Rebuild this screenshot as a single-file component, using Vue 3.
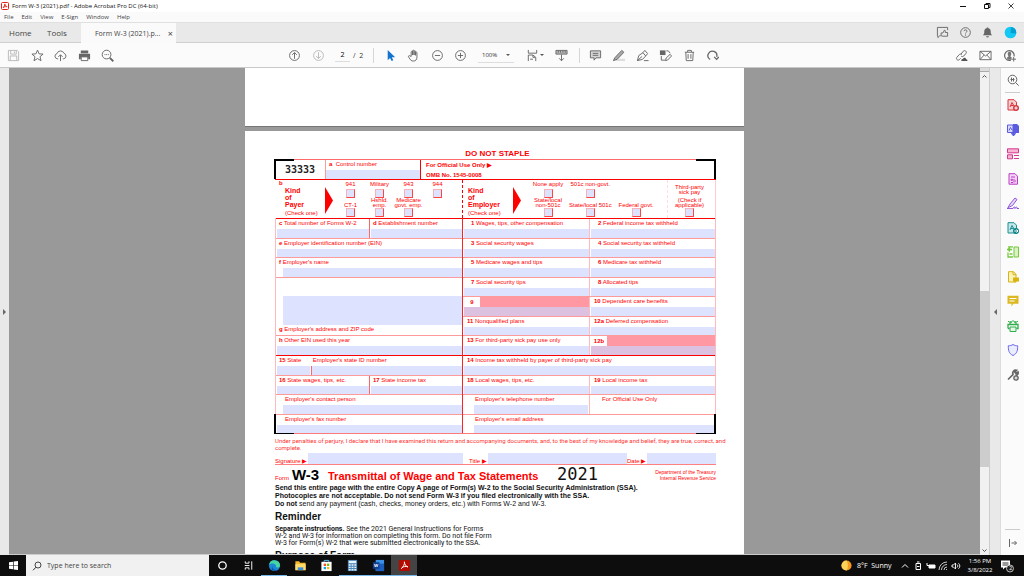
<script setup>
const payerKinds = [
  { top: ['941'], bottom: ['CT-1'] },
  { top: ['Military'], bottom: ['Hshld.', 'emp.'] },
  { top: ['943'], bottom: ['Medicare', 'govt. emp.'] },
  { top: ['944'], bottom: null },
]
const employerKinds = [
  { top: ['None apply'], bottom: ['State/local', 'non-501c'] },
  { top: ['501c non-govt.'], bottom: ['State/local 501c'] },
  { top: null, bottom: ['Federal govt.'] },
]
const leftRows = [
  { cells: [{ n: 'c', t: 'Total number of Forms W-2' }, { n: 'd', t: 'Establishment number' }] },
  { cells: [{ n: 'e', t: 'Employer identification number (EIN)' }] },
  { cells: [{ n: 'f', t: "Employer's name", c: 'indent wide' }] },
  { cells: [{ n: 'g', t: "Employer's address and ZIP code", c: 'address' }] },
  { cells: [{ n: 'h', t: 'Other EIN used this year' }] },
  { strong: true, c: 'state', cells: [{ n: '15', t: 'State' }, { n: '', t: "Employer's state ID number" }] },
  { cells: [{ n: '16', t: 'State wages, tips, etc.' }, { n: '17', t: 'State income tax' }] },
  { cells: [{ n: '', t: "Employer's contact person", c: 'indent contact' }] },
  { cells: [{ n: '', t: "Employer's fax number", c: 'contact' }] },
]
const rightRows = [
  { cells: [{ n: '1', t: 'Wages, tips, other compensation' }, { n: '2', t: 'Federal income tax withheld' }] },
  { cells: [{ n: '3', t: 'Social security wages' }, { n: '4', t: 'Social security tax withheld' }] },
  { cells: [{ n: '5', t: 'Medicare wages and tips' }, { n: '6', t: 'Medicare tax withheld' }] },
  { cells: [{ n: '7', t: 'Social security tips' }, { n: '8', t: 'Allocated tips' }] },
  { cells: [{ n: '9', t: '', c: 'shaded' }, { n: '10', t: 'Dependent care benefits', c: 'ten' }] },
  { cells: [{ n: '11', t: 'Nonqualified plans', c: 'ten' }, { n: '12a', t: 'Deferred compensation', c: 'ten' }] },
  { cells: [{ n: '13', t: 'For third-party sick pay use only', c: 'ten' }, { n: '12b', t: '', c: 'shaded' }] },
  { strong: true, cells: [{ n: '14', t: 'Income tax withheld by payer of third-party sick pay', c: 'ten' }] },
  { cells: [{ n: '18', t: 'Local wages, tips, etc.', c: 'ten' }, { n: '19', t: 'Local income tax', c: 'ten' }] },
  { cells: [{ n: '', t: "Employer's telephone number", c: 'indent contact' }, { n: '', t: 'For Official Use Only', c: 'contact blank' }] },
  { cells: [{ n: '', t: "Employer's email address", c: 'indent contact' }] },
]
</script>

<template>
  <div class="app">
    <header class="titlebar">
      <svg class="i8" viewBox="0 0 8 8"><rect x="0.5" y="0.5" width="7" height="7" rx="1" fill="#fff" stroke="#e2231a" /><path d="M2 6c1-1 2-3 1.800-4.200M3.800 2c.4 1.500 1.200 2.300 2.400 2.600M2.300 5.300c1-.6 2.500-.8 3.800-.6" stroke="#e2231a" fill="none" stroke-width=".9" /></svg>
      <span class="title">Form W-3 (2021).pdf - Adobe Acrobat Pro DC (64-bit)</span>
      <div class="win">
        <button aria-label="Minimize"><svg viewBox="0 0 8 8"><path d="M1 4.500h6" stroke="#111" /></svg></button>
        <button aria-label="Restore"><svg viewBox="0 0 8 8"><path d="M1.500 2.500h4v4h-4zM3 2.500v-1h4v4H5.500" stroke="#111" fill="none" /></svg></button>
        <button aria-label="Close"><svg viewBox="0 0 8 8"><path d="M1.500 1.500l5 5M6.500 1.500l-5 5" stroke="#111" stroke-width=".8" /></svg></button>
      </div>
    </header>
    <nav class="menubar">
      <button>File</button><button>Edit</button><button>View</button><button>E-Sign</button><button>Window</button><button>Help</button>
    </nav>
    <div class="tabs">
      <button class="tab home">Home</button>
      <button class="tab tools">Tools</button>
      <div class="tab current"><span>Form W-3 (2021).p...</span><button aria-label="Close tab">×</button></div>
      <div class="tabicons">
        <svg viewBox="0 0 14 14"><path d="M5 10.500H4l-2 2v-2H1.500v-9h11v3" class="s" /><path d="M5.500 7.500h2l1.500-3 1 .5v2h2.500v4h-5l-2-.5z" class="s" /></svg>
        <svg viewBox="0 0 14 14"><circle cx="7" cy="7" r="5.200" class="s" /><path d="M5.400 5.600c0-2 3.200-2 3.200 0 0 1.200-1.600 1.100-1.600 2.500M7 9.200v1.200" class="s" /></svg>
        <svg viewBox="0 0 14 14"><path d="M7 1.500c.8 0 1 .5 1 1 2 .6 2.500 2 2.500 4 0 2 .5 2.500 1.500 3.500H2c1-1 1.500-1.500 1.500-3.500 0-2 .5-3.400 2.500-4 0-.5.2-1 1-1zM5.500 11h3a1.500 1.500 0 0 1-3 0z" fill="#666" /></svg>
        <svg viewBox="0 0 14 14"><circle cx="7" cy="7" r="6.300" fill="#12c8f4" /><path d="M7 7.500L7.600 1A6 6 0 0 1 13 8z" fill="#05a0cf" /></svg>
      </div>
    </div>
    <div class="toolbar">
      <div class="group g1">
        <button aria-label="Save"><svg viewBox="0 0 14 14"><path d="M1.500 1.500h9.500l1.500 1.500v9.500h-11z M4 1.500v4h6v-4M3.500 12.500v-5h7v5M8 2.500v2" class="s dim" /></svg></button>
        <button aria-label="Star"><svg viewBox="0 0 14 14"><path d="M7 1.200l1.700 4 4.300.3-3.300 2.800 1.100 4.300L7 10.300l-3.800 2.300 1.100-4.300L1 5.500l4.300-.3z" class="s" /></svg></button>
        <button aria-label="Upload"><svg viewBox="0 0 14 14"><path d="M4.500 10.500h-1a2.800 2.800 0 0 1-.3-5.500 4 4 0 0 1 7.600-.3 3 3 0 0 1-.3 5.800h-1M7 13V6.500M4.700 8.500L7 6.200l2.300 2.300" class="s" /></svg></button>
        <button aria-label="Print"><svg viewBox="0 0 14 14"><path d="M3 1.500h8v3H3zM1 5h12v6h-2V9H3v2H1z" fill="#666" /><path d="M3.500 8.500h7v4h-7z" fill="#fff" stroke="#666" /></svg></button>
        <button aria-label="Find"><svg viewBox="0 0 14 14"><circle cx="6" cy="6" r="4.700" class="s" /><path d="M9.500 9.500l3.700 3.700" class="s" stroke-width="2" /><path d="M3.800 6h4.800" class="s" stroke-dasharray="1 .8" /></svg></button>
      </div>
      <div class="group g2">
        <button aria-label="Previous page"><svg viewBox="0 0 14 14"><circle cx="7" cy="7" r="5.300" class="s" /><path d="M7 10.500V4M4.500 6.300L7 3.800l2.500 2.500" class="s" /></svg></button>
        <button aria-label="Next page"><svg viewBox="0 0 14 14"><circle cx="7" cy="7" r="5.300" class="s dim" /><path d="M7 3.500V10M4.500 7.700L7 10.200l2.500-2.500" class="s dim" /></svg></button>
      </div>
      <div class="pager"><input aria-label="Page number" value="2" /><span>/ &nbsp;2</span></div>
      <i class="sep"></i>
      <div class="group g3">
        <button aria-label="Select"><svg viewBox="0 0 14 14"><path d="M4 1v11l2.500-2.300L8.200 13l1.800-.9-1.600-3.200H12z" fill="#1473cf" /></svg></button>
        <button aria-label="Hand"><svg viewBox="0 0 14 14"><path d="M4.500 8V3.200c0-1 1.500-1 1.500 0V6.500 2c0-1 1.600-1 1.600 0v4.500V2.600c0-1 1.600-1 1.600 0v4.200V4c0-1 1.500-1 1.500 0v5c0 2.500-1.500 4-4 4-2 0-3-1-5-4.500-.6-1.200.8-1.800 1.500-1z" class="s" /></svg></button>
        <button aria-label="Zoom out"><svg viewBox="0 0 14 14"><circle cx="7" cy="7" r="5.300" class="s" /><path d="M4.200 7h5.600" class="s" /></svg></button>
        <button aria-label="Zoom in"><svg viewBox="0 0 14 14"><circle cx="7" cy="7" r="5.300" class="s" /><path d="M4.200 7h5.600M7 4.200v5.600" class="s" /></svg></button>
      </div>
      <button class="zoom"><span>100%</span><i class="caret"></i></button>
      <button class="fit" aria-label="Fit page"><svg viewBox="0 0 14 14"><path d="M2.500 1v3.500h9V1M2.500 13V6.500h5l3 2.500V13M7.500 6.500v2.500H10M4.500 11h3" class="s" /></svg><i class="caret"></i></button>
      <button class="rule" aria-label="Scroll mode"><svg viewBox="0 0 14 14"><path d="M1 1.500h12v4H1z" fill="#bbb" stroke="#666" /><path d="M3.500 2v2M6 2v2M8.500 2v2M11 2v2" stroke="#666" /><path d="M7 6v6.500M4.500 10L7 12.700 9.500 10" class="s" /></svg></button>
      <i class="sep"></i>
      <div class="group g4">
        <button aria-label="Comment"><svg viewBox="0 0 14 14"><path d="M1.500 2h11v7.500H7.500L5.500 12V9.500h-4z" fill="#d6d6d6" stroke="#666" /><path d="M4 4.700h6M4 6.800h6" class="s" /></svg></button>
        <button aria-label="Highlight"><svg viewBox="0 0 14 14"><path d="M6 10.500h8V13H4z" fill="#ddd" /><path d="M3 9.500L10.500 1.500 12.800 3.500 5.500 11.200 1.500 12.500z" fill="#aaa" stroke="#666" /></svg></button>
        <button aria-label="Sign"><svg viewBox="0 0 14 14"><path d="M1.500 12.500L3 7l4.500-3L10.500 7.500 7 11.200zM7.500 4L9.500 1.500 12.500 5l-2 2.500M1.500 12.500L6.500 8M8.500 12.500h5" class="s" /></svg></button>
        <button aria-label="Stamp"><svg viewBox="0 0 14 14"><path d="M1 1.500h6v5H1z" fill="#666" /><path d="M8 2h2L12 4.500M2.500 7.500v4.500h4M7 12.500l.7-2.800 4.300-4L13.500 7.500 9.200 12z" class="s" /></svg></button>
        <button aria-label="Delete"><svg viewBox="0 0 14 14"><path d="M2 3.500h10M5 3.300V1.500h4v1.800M3 3.500l.5 9h7l.5-9M5.500 5.500v5M8.500 5.500v5" class="s" /></svg></button>
        <button aria-label="Rotate"><svg viewBox="0 0 14 14"><path d="M4.500 11.300A4.800 4.800 0 1 1 11.500 8.500M8.800 8.500l2.600 2.700L13.800 8.500" class="s" stroke-width="1.400" /></svg></button>
      </div>
      <div class="group g5">
        <button aria-label="Share link"><svg viewBox="0 0 14 14"><path d="M6.500 5.500L9 2.300c1.500-1.600 4.200.5 2.900 2.300L9.500 7.500C8.500 8.600 7 8.300 6.500 7.500M7.500 6C6.500 5 5 5.500 4.300 6.300L2 9c-1.400 2 1.200 4 2.800 2.400L6 10" class="s" /><path d="M7 13c-.8-1.500.3-2.600 1.500-2.300.8-1.800 3.300-1.300 3.400.3 1.600-.1 1.900 1.300 1.300 2z" fill="#555" /></svg></button>
        <button aria-label="Mail"><svg viewBox="0 0 14 14"><path d="M1 2.500h12v9H1zM1 2.500l6 5 6-5M1 11.500L5.500 6.500M13 11.500L8.500 6.500" class="s" /></svg></button>
        <button aria-label="Account"><svg viewBox="0 0 14 14"><path d="M8.500 12A5.200 5.200 0 1 1 12 8" class="s" stroke-width="1.300" /><path d="M7 3c2.500 0 2.200 3.500 1 5l1.500 1.200-.8 2.500H4.800L4.300 9.200 6 8C4.800 6.500 4.500 3 7 3z" fill="#777" /><path d="M11.500 8.500v5M9 11h5" class="s" /></svg></button>
      </div>
    </div>

    <main class="body">
      <button class="gutter left" aria-label="Open panel"><i class="tri right"></i></button>
      <div class="canvas">
        <div class="sheet first"></div>
        <article class="sheet second">
          <h1>DO NOT STAPLE</h1>
          <form class="form" @submit.prevent>
            <div class="top">
              <div class="code">33333</div>
              <label class="control"><span><b>a</b>&nbsp; Control number</span><input /></label>
              <div class="official">For Official Use Only ▶<br />OMB No. 1545-0008</div>
            </div>
            <div class="kinds">
              <div class="half">
                <div class="kind payer"><b class="ltr">b</b><b>Kind</b><b>of</b><b>Payer</b><span>(Check one)</span></div>
                <svg class="arrow" viewBox="0 0 8 27"><path d="M0 0l8 13.500L0 27z" fill="#f00" /></svg>
                <div class="boxes four">
                  <div v-for="(k, i) in payerKinds" :key="i" class="pair">
                    <label><span v-for="t in k.top" :key="t">{{ t }}</span><input type="checkbox" /></label>
                    <label v-if="k.bottom"><span v-for="t in k.bottom" :key="t">{{ t }}</span><input type="checkbox" /></label>
                  </div>
                </div>
              </div>
              <div class="half employer">
                <div class="kind"><b class="ltr">&nbsp;</b><b>Kind</b><b>of</b><b>Employer</b><span>(Check one)</span></div>
                <svg class="arrow" viewBox="0 0 8 27"><path d="M0 0l8 13.500L0 27z" fill="#f00" /></svg>
                <div class="boxes three">
                  <div v-for="(k, i) in employerKinds" :key="i" class="pair">
                    <label v-if="k.top"><span v-for="t in k.top" :key="t">{{ t }}</span><input type="checkbox" /></label>
                    <i v-else></i>
                    <label><span v-for="t in k.bottom" :key="t">{{ t }}</span><input type="checkbox" /></label>
                  </div>
                </div>
                <label class="sick"><span>Third-party<br />sick pay</span><span>(Check if<br />applicable)</span><input type="checkbox" /></label>
              </div>
            </div>
            <div class="fields">
              <div class="col lcol">
                <div v-for="(r, i) in leftRows" :key="i" class="row" :class="[r.c, { strong: r.strong, one: r.cells.length === 1 }]">
                  <label v-for="c in r.cells" :key="c.t" class="cell" :class="c.c"><span class="lab"><b>{{ c.n }}</b> {{ c.t }}</span><input /></label>
                </div>
              </div>
              <div class="col rcol">
                <div v-for="(r, i) in rightRows" :key="i" class="row" :class="{ strong: r.strong, one: r.cells.length === 1 }">
                  <label v-for="c in r.cells" :key="c.n + c.t" class="cell" :class="c.c"><span class="lab"><b>{{ c.n }}</b> {{ c.t }}</span><input v-if="c.c !== 'contact blank'" /></label>
                </div>
              </div>
            </div>
            <i class="corner tl"></i><i class="corner tr"></i><i class="corner bl"></i><i class="corner br"></i>
          </form>
          <p class="perjury">Under penalties of perjury, I declare that I have examined this return and accompanying documents, and, to the best of my knowledge and belief, they are true, correct, and<br />complete.</p>
          <div class="sign">
            <label class="sig">Signature ▶<input /></label>
            <label class="tit">Title ▶<input /></label>
            <label class="dat">Date ▶<input /></label>
          </div>
          <div class="name">
            <span class="fm">Form</span><span class="w3">W-3</span><span class="tr">Transmittal of Wage and Tax Statements</span><span class="yr">2021</span>
            <span class="dept">Department of the Treasury<br />Internal Revenue Service</span>
          </div>
          <p class="send"><b>Send this entire page with the entire Copy A page of Form(s) W-2 to the Social Security Administration (SSA).<br />Photocopies are not acceptable. Do not send Form W-3 if you filed electronically with the SSA.</b><br /><b>Do not</b> send any payment (cash, checks, money orders, etc.) with Forms W-2 and W-3.</p>
          <h2>Reminder</h2>
          <p class="note"><b>Separate instructions.</b> See the 2021 General Instructions for Forms<br />W-2 and W-3 for information on completing this form. Do not file Form<br />W-3 for Form(s) W-2 that were submitted electronically to the SSA.</p>
          <h2>Purpose of Form</h2>
        </article>
      </div>
      <div class="scroll"><i class="split"></i><svg viewBox="0 0 9 9"><path d="M2.500 5.500l2-2 2 2" stroke="#555" fill="none" /></svg><i class="thumb"></i><svg viewBox="0 0 9 9"><path d="M2.500 3.500l2 2 2-2" stroke="#555" fill="none" /></svg></div>
      <button class="gutter rightg" aria-label="Collapse panel"><i class="tri lefty"></i></button>
      <aside class="side">
        <svg class="look" viewBox="0 0 12 12"><circle cx="5.500" cy="5.500" r="4.300" class="s" /><path d="M8.700 8.700l3 3" class="s" /><path d="M3.500 5.500h4M4.500 3.500v4M6.500 4v3.500" class="s" /></svg>
        <hr />
        <div class="stack">
          <svg viewBox="0 0 12 12"><path d="M1 .7h6l2.500 2.500V11H1z" fill="#f9d0d0" stroke="#d7373f" /><path d="M3 8l2-4.500L7 7M3.500 6.500h3" stroke="#d7373f" fill="none" /><circle cx="9" cy="9" r="3" fill="#d7373f" /><path d="M7.300 9h3.400M9 7.300v3.400" stroke="#fff" /></svg>
          <svg viewBox="0 0 12 12"><path d="M6 0h4l2 2v7H6z" fill="#5c5ce0" /><path d="M.5 1h5.500v7.500H.5z" fill="#d9d9fb" stroke="#5c5ce0" /><path d="M2 6.500l1.500-3L5 6" stroke="#5c5ce0" fill="none" /><path d="M6.500 5v6M4.500 9l2 2.500 2-2.500" stroke="#5c5ce0" stroke-width="1.400" fill="none" /></svg>
          <svg viewBox="0 0 12 12"><path d="M.5.800h11v4H.5zM.5 6.800h5v4h-5z" fill="#f5b5d3" stroke="#d83790" /><path d="M7 7.500h5M7 10.500h5" stroke="#d83790" /></svg>
          <svg viewBox="0 0 12 12"><path d="M2 .7h6l2.500 2.500v8H2z" fill="#f4d3f6" stroke="#b93ec4" /><path d="M4 4h4M4 6.300h1.500v1H4zM7 6v3.500M4 9.500h2M8 8h1" stroke="#b93ec4" fill="none" /></svg>
          <svg viewBox="0 0 12 12"><path d="M.5 11.500L3 7l5-6 2 1.500-4.500 6L2.500 10zM0 11.500h6c1-2.500 2-2 2 0 1-2 2-2 2 0h2" fill="#e3d8fb" stroke="#9256d9" /></svg>
          <svg viewBox="0 0 12 12"><path d="M1 .7h6l2.500 2.500V11H1z" fill="#c3e6e6" stroke="#1b8e92" /><path d="M3 8l2-4.500L7 7M3.500 6.500h3" stroke="#1b8e92" fill="none" /><circle cx="9" cy="9" r="3" fill="#128488" /><path d="M7.300 9h3.400M9.500 7.500L11 9 9.500 10.500" stroke="#fff" fill="none" /></svg>
          <svg viewBox="0 0 12 12"><path d="M7 1h4.500v10H7z" fill="#d6f3c0" stroke="#77c940" /><path d="M0 3.500h5M3 1.500L1 3.500l2 2M1 6.500v4.500h5M2.500 8h3M1 .8h5" stroke="#77c940" fill="none" stroke-width="1.300" /></svg>
          <svg viewBox="0 0 12 12"><path d="M1.500.7h5L9 3.200V11H1.500z" fill="#fbf1bd" stroke="#d9b40c" /><path d="M6 .7v3h3" stroke="#d9b40c" fill="none" /><path d="M6 6.500h6v4H9l-1.500 1.500v-1.500H6z" fill="#d9b40c" /></svg>
          <svg viewBox="0 0 12 12"><path d="M.5.800h11v8H6.500l-2 2.700V8.800h-4z" fill="#dcb923" /><path d="M2.500 3.500h7M2.500 6h5" stroke="#fff" /></svg>
          <svg viewBox="0 0 12 12"><path d="M1 8.500v-4h10v4H9.500M2.500 8.500H1M3 4V2h2M7 2h2v2" stroke="#2fae4c" stroke-width="1.300" fill="none" /><path d="M3 7h6v4.500H3z" fill="#e4f8e7" stroke="#2fae4c" /><path d="M1 1l1 1M11 1l-1 1M6 0v2" stroke="#2fae4c" /></svg>
          <svg viewBox="0 0 12 12"><path d="M6 .5c1.500 1 3 1.300 4.700 1.300 0 4.500-.5 7.700-4.700 9.700C1.800 9.500 1.300 6.300 1.300 1.800 3 1.800 4.500 1.500 6 .5z" fill="#ececff" stroke="#6767e8" /></svg>
          <svg viewBox="0 0 12 12"><path d="M1 10.500l5-5C5 3 7 .8 9.500 1.300L7.800 3l1 1.300L11 3c.5 1.700-.5 3.300-2.500 3.500" fill="none" stroke="#666" stroke-width="1.700" /><circle cx="9" cy="9" r="2.800" fill="#666" /><path d="M7.500 9h3M9 7.500v3" stroke="#fff" /></svg>
        </div>
        <hr class="last" />
        <svg class="out" viewBox="0 0 12 12"><path d="M2.500 2v8M4.500 6h5M7.500 4l2 2-2 2" class="s" /></svg>
      </aside>
    </main>

    <footer class="taskbar">
      <button class="start" aria-label="Start"><svg viewBox="0 0 10 10"><path d="M0 1.300l4.500-.6v4H0zM5.200.6L10 0v4.700H5.200zM0 5.300h4.500v4L0 8.700zM5.200 5.300H10V10l-4.800-.6z" fill="#fff" /></svg></button>
      <label class="search"><svg viewBox="0 0 10 10"><circle cx="6" cy="4" r="3" fill="none" stroke="#333" stroke-width=".9" /><path d="M4 6.200L1 9.300" stroke="#333" /></svg><input placeholder="Type here to search" aria-label="Search" /></label>
      <div class="pins">
        <button aria-label="Cortana"><svg viewBox="0 0 14 14"><circle cx="7" cy="7" r="4" fill="none" stroke="#fff" stroke-width="1.400" /></svg></button>
        <button aria-label="Task view"><svg viewBox="0 0 14 14"><path d="M3.500 2.500v2h4v-2M3.500 11.500v-2h4v2M3 7h5M10.500 2.500v9" stroke="#fff" fill="none" /></svg></button>
        <button class="open" aria-label="Edge"><svg viewBox="0 0 14 14"><circle cx="7" cy="7" r="6" fill="#1b86d6" /><path d="M1.200 6A6 6 0 0 1 13 7c0 2.500-4 3-4.500 1.200C9.500 5 4 3.500 1.200 6z" fill="#45d6a0" /><path d="M4.500 8c0 3 3 4.500 6.500 3.500-2 2-6 1.500-7-1z" fill="#0c4fa0" /></svg></button>
        <button aria-label="Files"><svg viewBox="0 0 14 14"><path d="M1.500 2.500h4l1 1.500h6v8h-11z" fill="#f5b92e" /><path d="M1.500 5.500h11v6.500h-11z" fill="#ffdb6b" /><path d="M4 12V9h6v3" fill="#3b8ede" /></svg></button>
        <button aria-label="Store"><svg viewBox="0 0 14 14"><path d="M4.500 3V1.500h5V3" fill="none" stroke="#5cc1f5" /><path d="M1.500 3h11v10h-11z" fill="#fff" /><path d="M4 5h2.500v2.500H4z" fill="#f25022" /><path d="M7.500 5H10v2.500H7.500z" fill="#7fba00" /><path d="M4 8.500h2.500V11H4z" fill="#00a4ef" /><path d="M7.500 8.500H10V11H7.500z" fill="#ffb900" /></svg></button>
        <button class="open" aria-label="Calculator"><svg viewBox="0 0 14 14"><path d="M2 1h10v12H2z" fill="#4c86b8" /><path d="M3 2h8v2.500H3z" fill="#e8f4ff" /><path d="M3 6.500h8M3 9h8M3 11.500h8" stroke="#e8f4ff" stroke-width="1.500" stroke-dasharray="2 1" /></svg></button>
        <button class="open" aria-label="Word"><svg viewBox="0 0 14 14"><path d="M4 1h9v12H4z" fill="#3c91e6" /><path d="M4 5h9v8H4z" fill="#1b5ebe" /><path d="M1 3.500h7v7H1z" fill="#103f91" /><path d="M2.500 5.500l1 3 1-3 1 3 1-3" stroke="#fff" fill="none" stroke-width=".8" /></svg></button>
        <button class="open active" aria-label="Acrobat"><svg viewBox="0 0 14 14"><rect x="1" y="1" width="12" height="12" rx="1.500" fill="#b30b00" /><path d="M3.500 10.500c2-1.500 3.800-5 3.500-7.500M6.800 3c.2 2.500 1.700 5 4 5.700M4 9.300c2-1.200 4.500-1.600 6.800-1" stroke="#fff" fill="none" /></svg></button>
      </div>
      <div class="tray">
        <svg class="sun" viewBox="0 0 12 12"><circle cx="6" cy="6" r="5.500" fill="#f79a1f" /><path d="M6 .5a5.500 5.500 0 0 0 0 11c2-3 2-8 0-11z" fill="#ffd35a" /></svg>
        <span class="weather">8°F&nbsp; Sunny</span>
        <div class="status">
          <svg viewBox="0 0 10 10"><path d="M2 6.500l3-3 3 3" stroke="#fff" fill="none" /></svg>
          <svg viewBox="0 0 10 10"><path d="M3 2.500h4.500v6H3zM4 1h2.500M4 5.500h2.500" stroke="#fff" fill="none" /></svg>
          <svg viewBox="0 0 10 10"><path d="M3 4h6v3H3z" fill="#fff" stroke="#fff" /><path d="M1 2v2.500h2" stroke="#fff" fill="none" /></svg>
          <svg viewBox="0 0 10 10"><path d="M1 9A8 8 0 0 1 9 1M3.500 9A5.500 5.500 0 0 1 9 3.500M6 9a3 3 0 0 1 3-3M8 9l1-1" stroke="#ddd" fill="none" stroke-width=".9" /></svg>
          <svg viewBox="0 0 10 10"><path d="M1 4h1.500L4.500 2v6L2.500 6H1zM6 3.500c1 1 1 2 0 3M7.500 2.300c1.800 1.700 1.800 3.700 0 5.400" stroke="#fff" fill="none" stroke-width=".9" /></svg>
        </div>
        <div class="clock">1:56 PM<br />3/8/2022</div>
        <button class="note-btn" aria-label="Notifications"><svg viewBox="0 0 14 14"><path d="M1 1.500h9v7H5L3 10.500v-2H1z" fill="#fff" /><path d="M2.500 4h6M2.500 6h6" stroke="#333" /><circle cx="10" cy="9.500" r="3.500" fill="#222" stroke="#ddd" stroke-width=".8" /></svg><span>2</span></button>
      </div>
    </footer>
  </div>
</template>

<style>
body { margin: 0; overflow: hidden; }
</style>

<style scoped>
.app { display: flex; flex-direction: column; height: 100vh; background: #fafafa; color: #333; font-family: "Open Sans", "Noto Sans", sans-serif; overflow: hidden; }
.app * { box-sizing: border-box; }
svg { display: block; }
button { border: 0; background: none; padding: 0; margin: 0; font: inherit; color: inherit; }
input { border: 0; padding: 0; margin: 0; border-radius: 0; outline: 0; font: inherit; min-width: 0; }
.s { fill: none; stroke: #666; }
.dim { stroke: #b8b8b8; }
.titlebar { display: flex; align-items: center; height: 12px; background: #fff; color: #111; font-size: 6px; flex: none; padding-left: 1px; }
.i8 { width: 8px; height: 8px; margin-right: 3px; }
.title { flex: 1; white-space: nowrap; }
.win { display: flex; gap: 16px; padding-right: 9px; }
.win svg { width: 8px; height: 8px; }
.menubar { display: flex; gap: 8px; height: 11px; flex: none; align-items: center; padding-left: 4px; font-size: 6px; border-bottom: 1px solid #e0e0e0; color: #444; }
.tabs { display: flex; height: 20px; flex: none; background: #e9e9e9; border-bottom: 1px solid #cfcfcf; font-size: 8px; color: #444; align-items: stretch; }
.tab { display: flex; align-items: center; }
.home { padding-left: 9px; width: 47px; }
.tools { width: 34px; }
.current { width: 95px; background: #fafafa; padding: 0 3px 0 14px; justify-content: space-between; font-size: 7px; white-space: nowrap; margin-bottom: -1px; }
.current button { font-size: 9px; }
.tabicons { margin-left: auto; display: flex; justify-content: space-between; align-items: center; width: 81px; margin-right: 7px; }
.tabicons svg { width: 13px; height: 13px; }
.toolbar { display: flex; align-items: center; height: 25px; flex: none; border-bottom: 1px solid #c9c9c9; background: #fbfbfb; font-size: 6px; }
.group { display: flex; justify-content: space-between; }
.toolbar svg { width: 13px; height: 13px; }
.g1 { width: 107px; margin-left: 7px; }
.g2 { width: 37px; margin-left: 174px; }
.pager { display: flex; margin-left: 10px; width: 32px; gap: 3px; align-items: center; font-size: 7px; }
.pager input { width: 15px; height: 14px; text-align: center; background: none; border-bottom: 1px solid #ddd; }
.pager span { white-space: nowrap; }
.sep { width: 1px; height: 15px; background: #d6d6d6; margin-left: 6px; }
.g3 { width: 83px; margin-left: 10px; }
.zoom { display: flex; align-items: center; justify-content: space-between; width: 36px; height: 15px; padding: 0 4px; margin-left: 11px; border-bottom: 1px solid #ddd; font-size: 6px; }
.caret { border: 2px solid transparent; border-top-color: #555; border-bottom: 0; height: 0; width: 0; }
.fit { display: flex; align-items: center; margin-left: 12px; gap: 1px; }
.rule { margin-left: 11px; margin-right: 5px; }
.g4 { width: 130px; margin-left: 9px; }
.g5 { width: 61px; margin-left: auto; margin-right: 8px; }
.body { display: flex; flex: 1; min-height: 0; }
.gutter { width: 9px; background: #e9e9e9; display: flex; align-items: center; justify-content: center; flex: none; }
.rightg { width: 11px; border-left: 1px solid #ccc; }
.tri { border: 3px solid transparent; width: 0; height: 0; }
.right { border-left-color: #666; border-right: 0; }
.lefty { border-right-color: #666; border-left: 0; }
.canvas { flex: 1; background: #999; overflow: hidden; display: flex; flex-direction: column; align-items: center; border-bottom: 1px solid #ccc; }
.sheet { background: #fff; width: 499px; flex: none; }
.first { height: 59px; border-bottom: 1px solid #777; margin-bottom: 4px; }
.second { padding: 18px 28px 0 30px; font-family: "Liberation Sans", Arial, sans-serif; color: #111; }
h1 { margin: 0; font-size: 8px; line-height: 10px; text-align: center; color: #f00; padding-left: 4px; }
.form { position: relative; color: #f00; font-size: 6px; border-top: 1px solid #ff6b6b; border-bottom: 1px solid #ff7a7a; }
.top { display: flex; height: 19px; }
.code { width: 51px; text-align: center; color: #222; font: bold 10px/19px "DejaVu Sans Mono", monospace; border-right: 1px solid #f99; }
.control { width: 95px; display: flex; flex-direction: column; border-right: 1px solid #f00; }
.control span { height: 10px; line-height: 9px; padding-left: 3px; }
.control input, .cell input, .sign input { background: #dde3ff; }
.control input { flex: 1; width: 100%; }
.official { font-weight: bold; line-height: 10px; padding-left: 5px; }
.kinds { display: grid; grid-template-columns: 187fr 254fr; height: 39px; border-top: 1px solid #f00; }
.half { display: flex; }
.employer { border-left: 1px dashed #f00; border-right: 1px solid #fcc; }
.kind { width: 50px; display: flex; flex-direction: column; padding-left: 10px; font-size: 7px; line-height: 7px; white-space: nowrap; }
.kind span { font-size: 6px; line-height: 10px; }
.kind .ltr { font-size: 6px; margin-left: -6px; line-height: 7px; }
.employer .kind { padding-left: 5px; }
.arrow { width: 8px; height: 27px; margin-top: 7px; flex: none; }
.boxes { display: grid; }
.four { grid-template-columns: repeat(4, 29px); margin-left: 3px; }
.three { grid-template-columns: 42px 40px 54px; margin-left: 6px; }
.pair { display: grid; grid-template-rows: 18px 19px; }
.pair label, .sick { display: flex; flex-direction: column; align-items: center; justify-content: flex-end; line-height: 5px; white-space: nowrap; text-align: center; }
.pair input, .sick input { appearance: none; width: 9px; height: 9px; flex: none; background: #dde3ff; border: 1px solid #f44; border-left-color: #f9b0b8; border-top-color: #f9b0b8; }
.pair label:first-child span { margin-bottom: 2px; }
.sick { flex: 1; border-left: 1px dashed #fdd; margin-left: 4px; padding: 0 4px 1px 0; }
.sick span:first-child { margin-bottom: 3px; }
.fields { display: grid; grid-template-columns: 187fr 254fr; }
.col { display: grid; }
.lcol { grid-template-rows: 20px 19px 20px 58px 20px 20px 19px 20px 19px; border-left: 1px solid #fbb; }
.rcol { grid-template-rows: 20px 19px 20px 19px 20px 19px 20px 20px 19px 20px 19px; border-left: 1px solid #f22; border-right: 1px solid #fbb; }
.row { display: grid; grid-template-columns: 1fr 1fr; border-top: 1px solid #ff9a9a; }
.row:first-child, .row.strong { border-top-color: #f00; }
.row.one { grid-template-columns: 1fr; }
.row.state { grid-template-columns: 34fr 153fr; }
.cell { display: flex; flex-direction: column; padding-left: 1px; min-width: 0; }
.cell + .cell { border-left: 1px solid #fbb; }
.lcol .cell + .cell { border-left-color: #f66; }
.state .cell + .cell { border-left: 0; }
.state .cell + .cell input { border-left: 1px solid #f66; }
.lab { height: 10px; line-height: 8px; padding-left: 2px; white-space: nowrap; }
.rcol .lab { padding-left: 7px; }
.rcol .ten .lab { padding-left: 3px; }
.lcol .contact .lab { padding-left: 8px; }
.rcol .contact .lab { padding-left: 11px; }
.cell input { flex: 1; width: 100%; display: block; height: auto; }
.indent input { width: auto; margin-left: 6px; }
.rcol .indent input { margin-left: 10px; margin-right: 1px; }
.address { flex-direction: column-reverse; padding-top: 18px; }
.address input { width: auto; margin-left: 6px; }
.shaded .lab { background: #ff98a2; padding: 0; }
.rcol .shaded .lab { padding: 0; }
.shaded .lab b { display: block; background: #fff; width: 16px; height: 10px; text-align: center; line-height: 10px; }
.shaded input { background: #dcc1e0; }
.corner { position: absolute; width: 20px; height: 20px; border: 0 solid #000; pointer-events: none; }
.tl { left: -1px; top: -1px; border-top-width: 2px; border-left-width: 2px; }
.corner.tr { right: 0; top: -1px; border-top-width: 2px; border-right-width: 2px; }
.bl { left: -1px; bottom: -1px; border-left-width: 2px; border-bottom-width: 1px; }
.br { right: 0; bottom: -1px; border-right-width: 2px; border-bottom-width: 1px; }
p { margin: 0; white-space: nowrap; }
.perjury { color: #f33; font: 6px/7px Roboto, "Liberation Sans", sans-serif; margin-top: 3px; }
.sign { display: flex; color: #f00; font-size: 6px; margin-top: 2px; border-bottom: 1px solid #ff8080; height: 12px; }
.sign label { display: flex; align-items: flex-end; gap: 1px; white-space: nowrap; }
.sign input { flex: 1; align-self: stretch; width: 0; }
.sig { width: 188px; }
.tit { width: 164px; padding-left: 6px; }
.dat { flex: 1; }
.name { display: flex; align-items: baseline; height: 19px; line-height: 18px; color: #f00; font-weight: bold; white-space: nowrap; }
.fm { font-size: 6px; font-weight: normal; width: 17px; }
.w3 { font-size: 15px; color: #000; width: 36px; }
.name .tr { font-size: 11px; width: 229px; }
.yr { font: 17px/18px "DejaVu Sans Mono", monospace; color: #111; }
.dept { margin-left: auto; font-size: 5px; line-height: 6px; font-weight: normal; text-align: right; align-self: center; }
.send { font-size: 7px; line-height: 8px; }
h2 { font-size: 10px; line-height: 12px; margin: 3px 0; }
.note { font: 7px/7px Roboto, "Liberation Sans", sans-serif; }
.scroll { width: 9px; background: #f1f1f1; display: flex; flex-direction: column; flex: none; }
.scroll svg { width: 9px; height: 9px; flex: none; }
.split { height: 4px; background: #ddd; border-bottom: 1px solid #aaa; }
.thumb { height: 176px; background: #cdcdcd; margin: 210px 0 auto; }
.side { width: 24px; display: flex; flex-direction: column; align-items: center; background: #fbfbfb; border-left: 1px solid #ddd; padding-top: 6px; flex: none; }
.side svg { width: 12px; height: 12px; flex: none; }
.side hr { width: 15px; border: 0; border-top: 1px solid #ccc; margin: 6px 0; }
.stack { display: flex; flex-direction: column; justify-content: space-between; height: 282px; }
.side .last { margin: auto 0 7px; }
.out { margin-bottom: 6px; }
.taskbar { display: flex; height: 21px; flex: none; background: #0d0d0d; color: #fff; align-items: stretch; }
.start { width: 26px; display: flex; align-items: center; justify-content: center; }
.start svg { width: 9px; height: 9px; }
.search { width: 183px; background: #f1f1f1; display: flex; align-items: center; padding-left: 6px; gap: 5px; }
.search svg { width: 10px; height: 10px; }
.search input { flex: 1; background: none; font-size: 7px; color: #333; }
.search input::placeholder { color: #444; opacity: 1; }
.pins { display: flex; }
.pins button { width: 26px; display: flex; align-items: center; justify-content: center; border-bottom: 1px solid transparent; }
.pins svg { width: 13px; height: 13px; }
.pins .open { border-bottom-color: #76b9ed; }
.pins .active { background: #444; }
.tray { margin-left: auto; display: flex; align-items: center; font-size: 7px; white-space: nowrap; }
.sun { width: 11px; height: 11px; margin-right: 5px; }
.weather { width: 43px; }
.status { display: flex; justify-content: space-between; width: 61px; }
.status svg { width: 10px; height: 10px; }
.clock { width: 38px; text-align: center; font-size: 6px; line-height: 9px; }
.note-btn { position: relative; width: 14px; margin: 0 10px 0 1px; }
.note-btn svg { width: 14px; height: 14px; }
.note-btn span { position: absolute; right: 2px; bottom: 1px; font-size: 5px; line-height: 7px; }
</style>
